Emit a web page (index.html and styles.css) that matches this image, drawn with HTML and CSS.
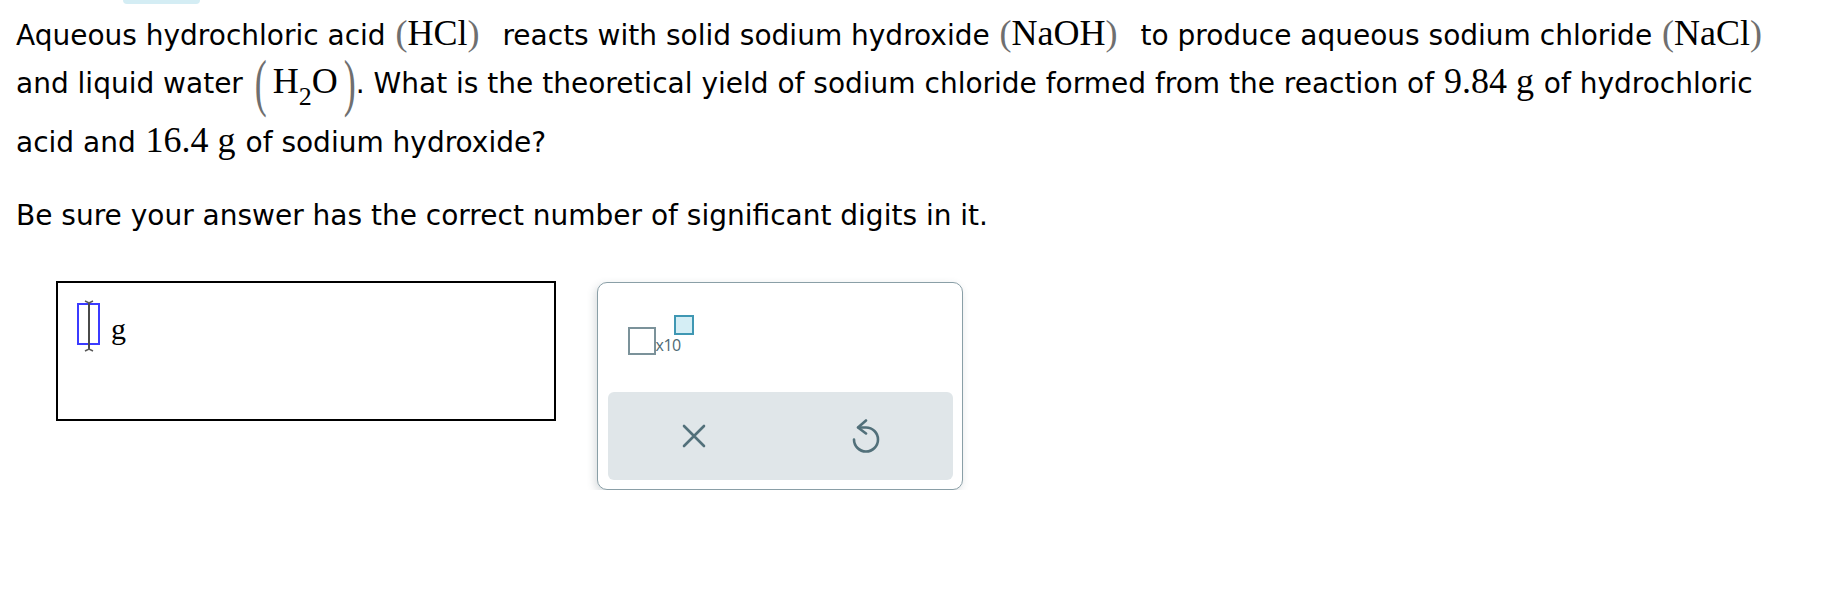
FILE: index.html
```html
<!DOCTYPE html>
<html lang="en">
<head>
<meta charset="utf-8">
<title>Question</title>
<link rel="stylesheet" href="styles.css">
</head>
<body>
<div class="tab"></div>
<div class="question">
  <p class="q">Aqueous hydrochloric acid <span class="m sp"><span class="pa">(</span>HCl<span class="pa">)</span></span> reacts with solid sodium hydroxide <span class="m sp"><span class="pa">(</span>NaOH<span class="pa">)</span></span> to produce aqueous sodium chloride <span class="m"><span class="pa">(</span>NaCl<span class="pa">)</span></span> and liquid water <span class="m tall"><span class="pa big open">(</span>H<span class="sub">2</span>O<span class="pa big close">)</span></span>. What is the theoretical yield of sodium chloride formed from the reaction of <span class="m">9.84 g</span> of hydrochloric acid and <span class="m">16.4 g</span> of sodium hydroxide?</p>
  <p class="note">Be sure your answer has the correct number of significant digits in it.</p>
</div>
<div class="answer-row">
  <div class="answer-box">
    <span class="slot">
      <svg class="caret" width="12" height="52" viewBox="0 0 12 52">
        <line x1="6" y1="2" x2="6" y2="50" stroke="#4a4a4a" stroke-width="2"/>
        <path d="M2 1 L6 3 L10 1 M2 51 L6 49 L10 51" stroke="#5a5a5a" stroke-width="1.5" fill="none"/>
      </svg>
    </span>
    <span class="unit">g</span>
  </div>
  <div class="panel">
    <div class="sci">
      <span class="sq-big"></span>
      <span class="x10">x10</span>
      <span class="sq-small"></span>
    </div>
    <div class="actions">
      <div class="act">
        <svg width="24" height="24" viewBox="0 0 24 24">
          <path d="M2 2 L22 22 M22 2 L2 22" stroke="#52707a" stroke-width="2.6" stroke-linecap="round" fill="none"/>
        </svg>
      </div>
      <div class="act">
        <svg width="28" height="34" viewBox="0 0 28 34">
          <path d="M14 1.5 L6 8.5 L14 14.5" stroke="#52707a" stroke-width="2.6" stroke-linecap="round" stroke-linejoin="round" fill="none"/>
          <path d="M6.5 8.5 H14 A12 12 0 1 1 2 20.5" stroke="#52707a" stroke-width="2.6" stroke-linecap="round" fill="none"/>
        </svg>
      </div>
    </div>
  </div>
</div>
</body>
</html>
```
FILE: styles.css
```css
* { box-sizing: border-box; }

body {
  margin: 0;
  background: #ffffff;
  color: #000000;
  font-family: "DejaVu Sans", Verdana, sans-serif;
}

.tab {
  width: 77px;
  height: 4px;
  margin-left: 123px;
  background: #d4edf4;
  border-radius: 0 0 12px 12px;
}

.question {
  padding: 0 36px 0 16px;
}

.q {
  margin: 8px 0 0;
  font-size: 28px;
  line-height: 48px;
}

.note {
  margin: 25px 0 0;
  font-size: 28px;
  line-height: 48px;
}

.m {
  font-family: "Liberation Serif", "Times New Roman", serif;
  font-size: 36px;
  line-height: 1;
  margin: 0 1px;
}

.m.sp { margin-right: 14px; }

.pa {
  color: #6f6f6f;
}

.tall {
  display: inline-block;
  padding-bottom: 20px;
  margin-right: 0;
}

.pa.big {
  display: inline-block;
  transform: translateY(2px) scaleY(1.75);
}

.pa.open { margin: 0 6px 0 2px; }
.pa.close { margin: 0 0 0 6px; }

.sub {
  position: relative;
  top: 12px;
  font-size: 26px;
}

.answer-row {
  display: flex;
  gap: 41px;
  margin-top: 41px;
  padding-left: 56px;
  align-items: flex-start;
}

.answer-box {
  width: 500px;
  height: 140px;
  border: 2px solid #000;
  display: flex;
  align-items: flex-start;
  padding: 20px 0 0 19px;
}

.slot {
  position: relative;
  width: 23px;
  height: 42px;
  border: 2px solid #3b3bff;
}

.caret {
  position: absolute;
  left: 3.5px;
  top: -5px;
}

.unit {
  font-family: "Liberation Serif", "Times New Roman", serif;
  font-size: 30px;
  line-height: 30px;
  margin: 11px 0 0 11px;
}

.panel {
  width: 366px;
  height: 208px;
  margin-top: 1px;
  border: 1.5px solid #8a9fa7;
  border-radius: 10px;
  box-shadow: -2px 3px 8px rgba(60, 80, 90, 0.2);
  background: #fff;
  padding: 9.5px;
  display: flex;
  flex-direction: column;
}

.sci {
  display: flex;
  align-items: flex-end;
  height: 40px;
  margin: 22px 0 0 20px;
}

.sq-big {
  width: 28px;
  height: 28px;
  border: 2.5px solid #7b929a;
}

.x10 {
  font-family: "Open Sans", "Liberation Sans", sans-serif;
  font-size: 16px;
  line-height: 16px;
  color: #4d6973;
  margin-bottom: 2px;
  letter-spacing: -0.5px;
}

.sq-small {
  align-self: flex-start;
  width: 20px;
  height: 20px;
  margin-left: -7px;
  border: 2.5px solid #3f97b3;
  background: #d5eef5;
}

.actions {
  margin-top: auto;
  height: 88px;
  background: #e0e6e9;
  border-radius: 6px;
  display: flex;
}

.act {
  flex: 1;
  display: flex;
  align-items: center;
  justify-content: center;
}
```
